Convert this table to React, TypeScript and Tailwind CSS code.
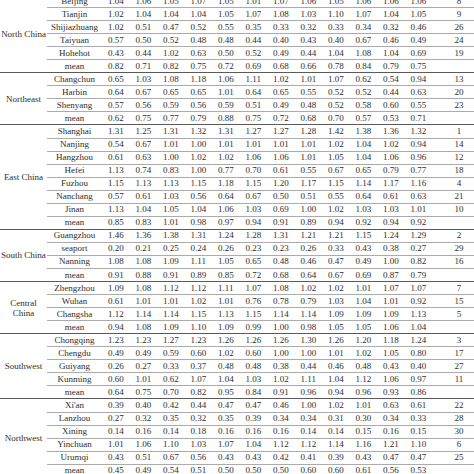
type Row = [string, string[], string];

type Group = {
  region: string[];
  rows: Row[];
};

const r = (city: string, vals: string, rank = ""): Row => [city, vals.split(" "), rank];

const groups: Group[] = [
  {
    region: ["North China"],
    rows: [
      r("Beijing", "1.04 1.06 1.05 1.07 1.05 1.01 1.07 1.06 1.05 1.06 1.06 1.06", "8"),
      r("Tianjin", "1.02 1.04 1.04 1.04 1.05 1.07 1.08 1.03 1.10 1.07 1.04 1.05", "9"),
      r("Shijiazhuang", "1.02 0.51 0.47 0.52 0.55 0.35 0.33 0.32 0.33 0.34 0.32 0.46", "26"),
      r("Taiyuan", "0.57 0.50 0.52 0.48 0.48 0.44 0.40 0.43 0.40 0.67 0.46 0.49", "24"),
      r("Hohehot", "0.43 0.44 1.02 0.63 0.50 0.52 0.49 0.44 1.04 1.08 1.04 0.69", "19"),
      r("mean", "0.82 0.71 0.82 0.75 0.72 0.69 0.68 0.66 0.78 0.84 0.79 0.75"),
    ],
  },
  {
    region: ["Northeast"],
    rows: [
      r("Changchun", "0.65 1.03 1.08 1.18 1.06 1.11 1.02 1.01 1.07 0.62 0.54 0.94", "13"),
      r("Harbin", "0.64 0.67 0.65 0.65 1.01 0.64 0.65 0.55 0.52 0.52 0.44 0.63", "20"),
      r("Shenyang", "0.57 0.56 0.59 0.56 0.59 0.51 0.49 0.48 0.52 0.58 0.60 0.55", "23"),
      r("mean", "0.62 0.75 0.77 0.79 0.88 0.75 0.72 0.68 0.70 0.57 0.53 0.71"),
    ],
  },
  {
    region: ["East China"],
    rows: [
      r("Shanghai", "1.31 1.25 1.31 1.32 1.31 1.27 1.27 1.28 1.42 1.38 1.36 1.32", "1"),
      r("Nanjing", "0.54 0.67 1.01 1.00 1.01 1.01 1.01 1.01 1.02 1.04 1.02 0.94", "14"),
      r("Hangzhou", "0.61 0.63 1.00 1.02 1.02 1.06 1.06 1.01 1.05 1.04 1.06 0.96", "12"),
      r("Hefei", "1.13 0.74 0.83 1.00 0.77 0.70 0.61 0.55 0.67 0.65 0.79 0.77", "18"),
      r("Fuzhou", "1.15 1.13 1.13 1.15 1.18 1.15 1.20 1.17 1.15 1.14 1.17 1.16", "4"),
      r("Nanchang", "0.57 0.61 1.03 0.56 0.64 0.67 0.50 0.51 0.55 0.64 0.61 0.63", "21"),
      r("Jinan", "1.13 1.04 1.05 1.04 1.06 1.03 0.69 1.00 1.02 1.03 1.03 1.01", "10"),
      r("mean", "0.85 0.83 1.01 0.98 0.97 0.94 0.91 0.89 0.94 0.92 0.94 0.92"),
    ],
  },
  {
    region: ["South China"],
    rows: [
      r("Guangzhou", "1.46 1.36 1.38 1.31 1.24 1.28 1.31 1.21 1.21 1.15 1.24 1.29", "2"),
      r("seaport", "0.20 0.21 0.25 0.24 0.26 0.23 0.23 0.26 0.33 0.43 0.38 0.27", "29"),
      r("Nanning", "1.08 1.08 1.09 1.11 1.05 0.65 0.48 0.46 0.47 0.49 1.00 0.82", "16"),
      r("mean", "0.91 0.88 0.91 0.89 0.85 0.72 0.68 0.64 0.67 0.69 0.87 0.79"),
    ],
  },
  {
    region: ["Central", "China"],
    rows: [
      r("Zhengzhou", "1.09 1.08 1.12 1.12 1.11 1.07 1.08 1.02 1.02 1.01 1.07 1.07", "7"),
      r("Wuhan", "0.61 1.01 1.01 1.02 1.01 0.76 0.78 0.79 1.03 1.04 1.01 0.92", "15"),
      r("Changsha", "1.12 1.14 1.14 1.15 1.13 1.15 1.14 1.14 1.09 1.09 1.09 1.13", "5"),
      r("mean", "0.94 1.08 1.09 1.10 1.09 0.99 1.00 0.98 1.05 1.05 1.06 1.04"),
    ],
  },
  {
    region: ["Southwest"],
    rows: [
      r("Chongqing", "1.23 1.23 1.27 1.23 1.26 1.26 1.26 1.30 1.26 1.20 1.18 1.24", "3"),
      r("Chengdu", "0.49 0.49 0.59 0.60 1.02 0.60 1.00 1.00 1.01 1.02 1.05 0.80", "17"),
      r("Guiyang", "0.26 0.27 0.33 0.37 0.48 0.48 0.38 0.44 0.46 0.48 0.43 0.40", "27"),
      r("Kunming", "0.60 1.01 0.62 1.07 1.04 1.03 1.02 1.11 1.04 1.12 1.06 0.97", "11"),
      r("mean", "0.64 0.75 0.70 0.82 0.95 0.84 0.91 0.96 0.94 0.96 0.93 0.86"),
    ],
  },
  {
    region: ["Northwest"],
    rows: [
      r("Xi'an", "0.39 0.40 0.42 0.44 0.47 0.47 0.46 1.00 1.02 1.01 0.63 0.61", "22"),
      r("Lanzhou", "0.27 0.32 0.35 0.32 0.35 0.39 0.34 0.34 0.31 0.30 0.34 0.33", "28"),
      r("Xining", "0.14 0.16 0.14 0.18 0.16 0.16 0.16 0.14 0.14 0.15 0.16 0.15", "30"),
      r("Yinchuan", "1.01 1.06 1.10 1.03 1.07 1.04 1.12 1.12 1.14 1.16 1.21 1.10", "6"),
      r("Urumqi", "0.43 0.51 0.67 0.56 0.43 0.43 0.42 0.41 0.39 0.43 0.47 0.47", "25"),
      r("mean", "0.45 0.49 0.54 0.51 0.50 0.50 0.50 0.60 0.60 0.61 0.56 0.53"),
    ],
  },
];

const TableRow = ({ row, isLast }: { row: Row; isLast: boolean }) => {
  const [city, vals, rank] = row;
  return (
    <div
      className={`grid grid-cols-[55px_repeat(12,27.5px)_1fr] items-center ${
        isLast ? "h-[12.06px]" : "h-[13.06px] border-b border-[#ababab]"
      }`}
    >
      <div className="text-center">{city}</div>
      {vals.map((v, i) => (
        <div key={i} className="text-center">
          {v}
        </div>
      ))}
      <div className="text-center pl-[12px]">{rank}</div>
    </div>
  );
};

export default function App() {
  return (
    <div className="w-[474px] h-[474px] overflow-hidden bg-white">
      <div
        className="mt-[-5px] text-[9px] leading-none text-[#2e2e2e]"
        style={{ fontFamily: '"Liberation Serif", "DejaVu Serif", serif' }}
      >
        {groups.map((g, gi) => (
          <div key={gi} className="flex border-b border-[#5a5a5a]">
            <div className="w-[47px] shrink-0 flex flex-col items-center justify-center leading-[10px] text-center">
              {g.region.map((line) => (
                <span key={line}>{line}</span>
              ))}
            </div>
            <div className="flex-1 flex flex-col">
              {g.rows.map((row, ri) => (
                <TableRow key={ri} row={row} isLast={ri === g.rows.length - 1} />
              ))}
            </div>
          </div>
        ))}
      </div>
    </div>
  );
}
